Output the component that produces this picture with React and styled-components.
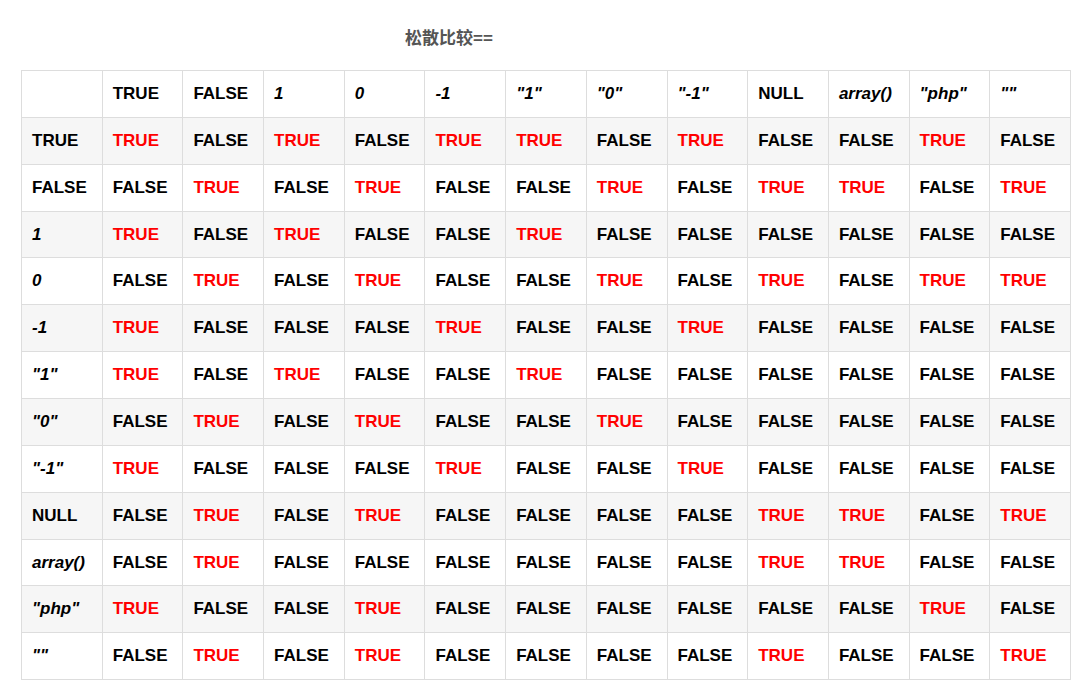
import React from "react";
import styled, { createGlobalStyle } from "styled-components";

const Global = createGlobalStyle`
  html, body { margin: 0; padding: 0; background: #fff; }
  body { font-family: "Liberation Sans", Arial, sans-serif; }
`;

const Page = styled.div`
  width: 1085px;
  padding: 27px 0 0 21px;
  box-sizing: border-box;
`;

const Title = styled.h3`
  margin: 0 0 19px 384px;
  font-size: 17px;
  line-height: 24px;
  font-weight: bold;
  color: #555;
  font-family: "Liberation Sans", "Noto Sans CJK SC", sans-serif;
`;

const Table = styled.table`
  width: 1050px;
  table-layout: fixed;
  border-collapse: collapse;
`;

const Row = styled.tr`
  background: ${(p) => (p.$striped ? "#f6f6f6" : "#fff")};
`;

const Cell = styled.td`
  height: ${(p) => p.$h}px;
  padding: 0 10px;
  border: 1px solid #ddd;
  font-size: 17px;
  font-weight: bold;
  font-style: ${(p) => (p.$italic ? "italic" : "normal")};
  color: ${(p) => (p.$red ? "#ff0000" : "#000")};
  text-align: left;
  vertical-align: middle;
  white-space: nowrap;
`;

const labels = [
  { t: "TRUE", i: false },
  { t: "FALSE", i: false },
  { t: "1", i: true },
  { t: "0", i: true },
  { t: "-1", i: true },
  { t: '"1"', i: true },
  { t: '"0"', i: true },
  { t: '"-1"', i: true },
  { t: "NULL", i: false },
  { t: "array()", i: true },
  { t: '"php"', i: true },
  { t: '""', i: true },
];

const matrix = [
  "TFTFTTFTFFTF",
  "FTFTFFTFTTFT",
  "TFTFFTFFFFFF",
  "FTFTFFTFTFTT",
  "TFFFTFFTFFFF",
  "TFTFFTFFFFFF",
  "FTFTFFTFFFFF",
  "TFFFTFFTFFFF",
  "FTFTFFFFTTFT",
  "FTFFFFFFTTFF",
  "TFFTFFFFFFTF",
  "FTFTFFFFTFFT",
];

const PITCH = 46.85;
const rowH = (i) => Math.round((i + 1) * PITCH) - Math.round(i * PITCH) - 1;

export default function App() {
  return (
    <Page>
      <Global />
      <Title>松散比较==</Title>
      <Table>
        <tbody>
          <Row>
            <Cell $h={rowH(0)} />
            {labels.map((l) => (
              <Cell key={l.t} $h={rowH(0)} $italic={l.i}>
                {l.t}
              </Cell>
            ))}
          </Row>
          {matrix.map((r, ri) => (
            <Row key={ri} $striped={ri % 2 === 0}>
              <Cell $h={rowH(ri + 1)} $italic={labels[ri].i}>
                {labels[ri].t}
              </Cell>
              {r.split("").map((v, ci) => (
                <Cell key={ci} $h={rowH(ri + 1)} $red={v === "T"}>
                  {v === "T" ? "TRUE" : "FALSE"}
                </Cell>
              ))}
            </Row>
          ))}
        </tbody>
      </Table>
    </Page>
  );
}
